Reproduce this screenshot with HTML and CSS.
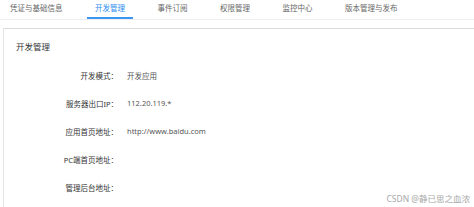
FILE: index.html
```html
<!DOCTYPE html>
<html lang="zh-CN">
<head>
  <meta charset="UTF-8" />
  <title>开发管理</title>
  <link rel="stylesheet" href="styles.css">
</head>
<body>
  <!-- 顶部标签 -->
  <div class="tabs">
    <a class="tab">凭证与基础信息</a>
    <a class="tab active">开发管理</a>
    <a class="tab">事件订阅</a>
    <a class="tab">权限管理</a>
    <a class="tab">监控中心</a>
    <a class="tab">版本管理与发布</a>
  </div>

  <!-- 开发管理 -->
  <div class="card">
    <h2 class="card-title">开发管理</h2>
    <div class="row">
      <span class="label">开发模式：</span>
      <span class="value">开发应用</span>
    </div>
    <div class="row">
      <span class="label">服务器出口IP：</span>
      <span class="value">112.20.119.*</span>
    </div>
    <div class="row">
      <span class="label">应用首页地址：</span>
      <span class="value">http://www.baidu.com</span>
    </div>
    <div class="row">
      <span class="label">PC端首页地址：</span>
      <span class="value"></span>
    </div>
    <div class="row">
      <span class="label">管理后台地址：</span>
      <span class="value"></span>
    </div>
  </div>

  <div class="watermark">CSDN @静已思之血浓</div>
</body>
</html>
```

FILE: styles.css
```css
* {
  margin: 0;
  padding: 0;
  box-sizing: border-box;
  font-family: "Noto Sans", "Noto Sans CJK SC", sans-serif;
}

body {
  width: 474px;
  height: 207px;
  background: #fff;
  overflow: hidden;
  position: relative;
  font-size: 7.5px;
  color: #333;
}

.tabs {
  display: flex;
  gap: 16.5px;
  padding-left: 2px;
  height: 20px;
  border-bottom: 1px solid #eeeeee;
}

.tab {
  padding: 0 8px;
  line-height: 17px;
  color: #666;
  border-bottom: 2px solid transparent;
  white-space: nowrap;
}

.tab.active {
  color: #2b8cf0;
  border-bottom-color: #3a95f3;
}

.card {
  margin: 8px 0 0 3px;
  border-top: 1px solid #dcdcdc;
  border-left: 1px solid #e6e6e6;
  height: 180px;
  padding: 12px 0 0 12px;
}

.card-title {
  font-size: 8.5px;
  font-weight: normal;
  line-height: 12px;
  color: #333;
  margin-bottom: 8px;
}

.row {
  display: flex;
  align-items: center;
  height: 28px;
}

.label {
  width: 102px;
  text-align: right;
  color: #333;
}

.value {
  margin-left: 9px;
  color: #555;
}

.watermark {
  position: absolute;
  right: 4px;
  bottom: 3px;
  color: #a8a8a8;
  font-size: 8.5px;
}
```
